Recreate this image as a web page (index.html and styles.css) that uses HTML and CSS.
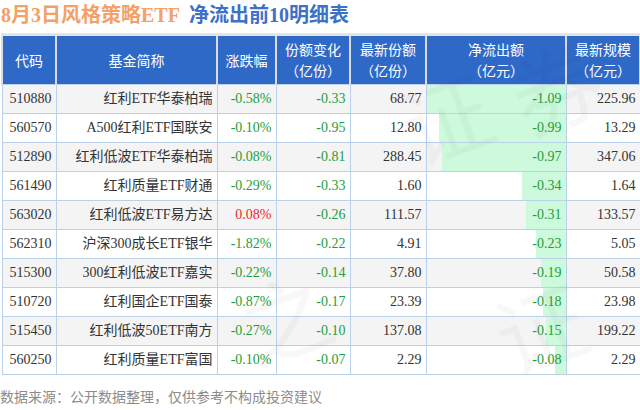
FILE: index.html
```html
<!DOCTYPE html>
<html lang="zh-CN">
<head>
<meta charset="utf-8">
<title>8月3日风格策略ETF 净流出前10明细表</title>
<link rel="stylesheet" href="styles.css">
</head>
<body>
<div class="page">
  <h1 class="title"><span class="t-orange">8月3日风格策略ETF</span><span class="t-blue">净流出前10明细表</span></h1>
  <div class="table-wrap">
    <table class="tbl">
      <colgroup>
        <col class="c1"><col class="c2"><col class="c3"><col class="c4"><col class="c5"><col class="c6"><col class="c7">
      </colgroup>
      <thead>
        <tr>
          <th>代码</th>
          <th>基金简称</th>
          <th>涨跌幅</th>
          <th>份额变化<br>（亿份）</th>
          <th>最新份额<br>（亿份）</th>
          <th>净流出额<br>（亿元）</th>
          <th>最新规模<br>（亿元）</th>
        </tr>
      </thead>
      <tbody>
        <tr><td>510880</td><td>红利ETF华泰柏瑞</td><td class="g">-0.58%</td><td class="g">-0.33</td><td>68.77</td><td class="bar-cell"><span class="bar" style="width:100%"></span><span class="v g">-1.09</span></td><td>225.96</td></tr>
        <tr><td>560570</td><td>A500红利ETF国联安</td><td class="g">-0.10%</td><td class="g">-0.95</td><td>12.80</td><td class="bar-cell"><span class="bar" style="width:90.8%"></span><span class="v g">-0.99</span></td><td>13.29</td></tr>
        <tr><td>512890</td><td>红利低波ETF华泰柏瑞</td><td class="g">-0.08%</td><td class="g">-0.81</td><td>288.45</td><td class="bar-cell"><span class="bar" style="width:89%"></span><span class="v g">-0.97</span></td><td>347.06</td></tr>
        <tr><td>561490</td><td>红利质量ETF财通</td><td class="g">-0.29%</td><td class="g">-0.33</td><td>1.60</td><td class="bar-cell"><span class="bar" style="width:31.2%"></span><span class="v g">-0.34</span></td><td>1.64</td></tr>
        <tr><td>563020</td><td>红利低波ETF易方达</td><td class="r">0.08%</td><td class="g">-0.26</td><td>111.57</td><td class="bar-cell"><span class="bar" style="width:28.4%"></span><span class="v g">-0.31</span></td><td>133.57</td></tr>
        <tr><td>562310</td><td>沪深300成长ETF银华</td><td class="g">-1.82%</td><td class="g">-0.22</td><td>4.91</td><td class="bar-cell"><span class="bar" style="width:21.1%"></span><span class="v g">-0.23</span></td><td>5.05</td></tr>
        <tr><td>515300</td><td>300红利低波ETF嘉实</td><td class="g">-0.22%</td><td class="g">-0.14</td><td>37.80</td><td class="bar-cell"><span class="bar" style="width:17.4%"></span><span class="v g">-0.19</span></td><td>50.58</td></tr>
        <tr><td>510720</td><td>红利国企ETF国泰</td><td class="g">-0.87%</td><td class="g">-0.17</td><td>23.39</td><td class="bar-cell"><span class="bar" style="width:16.5%"></span><span class="v g">-0.18</span></td><td>23.98</td></tr>
        <tr><td>515450</td><td>红利低波50ETF南方</td><td class="g">-0.27%</td><td class="g">-0.10</td><td>137.08</td><td class="bar-cell"><span class="bar" style="width:13.8%"></span><span class="v g">-0.15</span></td><td>199.22</td></tr>
        <tr><td>560250</td><td>红利质量ETF富国</td><td class="g">-0.10%</td><td class="g">-0.07</td><td>2.29</td><td class="bar-cell"><span class="bar" style="width:7.3%"></span><span class="v g">-0.08</span></td><td>2.29</td></tr>
      </tbody>
    </table>
  </div>
  <p class="source">数据来源：公开数据整理，仅供参考不构成投资建议</p>
  <div class="watermark" aria-hidden="true">
    <span class="wm wm1">证</span>
    <span class="wm wm2">券</span>
    <span class="wm wm3">之</span>
    <span class="wm wm4">证</span>
  </div>
</div>
</body>
</html>
```
FILE: styles.css
```css
html, body {
  margin: 0;
  padding: 0;
  background: #ffffff;
}
.page {
  position: relative;
  width: 640px;
  height: 410px;
  overflow: hidden;
  font-family: "Liberation Serif", "Noto Sans CJK SC", serif;
  color: #333333;
}
.title {
  margin: 0;
  padding: 2px 0 0 1px;
  height: 33px;
  box-sizing: border-box;
  font-size: 20px;
  line-height: 26px;
  font-weight: bold;
  white-space: nowrap;
}
.t-orange { color: #f4a066; }
.t-blue { color: #3d70c6; margin-left: 9px; }
.table-wrap {
  padding: 0 1px 0 1px;
}
.tbl {
  width: 638px;
  border-collapse: collapse;
  table-layout: fixed;
  font-size: 14px;
}
.c1 { width: 54px; }
.c2 { width: 161px; }
.c3 { width: 59px; }
.c4 { width: 74px; }
.c5 { width: 76px; }
.c6 { width: 140px; }
.c7 { width: 74px; }
.tbl th {
  height: 48px;
  padding: 0;
  background: #2f69c8;
  color: #ffffff;
  font-family: "Noto Sans CJK SC", sans-serif;
  font-weight: normal;
  font-size: 14px;
  line-height: 21px;
  text-align: center;
  border-top: 3px solid #e4e4e4;
  border-left: 2px solid #dcdcdc;
  border-right: 2px solid #dcdcdc;
  border-bottom: 1px solid #b9d2ea;
}
.tbl td {
  height: 28px;
  padding: 0 4px 0 0;
  text-align: right;
  white-space: nowrap;
  border: 1px solid #b9d2ea;
  color: #333333;
  line-height: 28px;
}
.tbl tbody tr:nth-child(odd) td { background: #f4f4f4; }
.tbl tbody tr:nth-child(even) td { background: #ffffff; }
.tbl td.g { color: #1f9e3c; }
.tbl td.r { color: #ee2a2a; }
.tbl td.bar-cell { position: relative; padding: 0; }
.bar {
  position: absolute;
  top: 0;
  bottom: 0;
  right: 0;
  background: #cdf9dc;
}
.v {
  position: relative;
  padding-right: 4px;
  color: #1f9e3c;
}
.source {
  margin: 11px 0 0 0;
  font-family: "Noto Sans CJK SC", sans-serif;
  font-size: 14px;
  line-height: 20px;
  color: #8c8c8c;
}
.watermark {
  position: absolute;
  inset: 0;
  pointer-events: none;
}
.wm {
  position: absolute;
  font-family: "Noto Sans CJK SC", sans-serif;
  font-size: 90px;
  line-height: 1;
  color: rgba(0, 0, 0, 0.028);
  white-space: nowrap;
  transform: rotate(-20deg);
}
.wm1 { left: 400px; top: 70px; }
.wm2 { left: 510px; top: 40px; }
.wm3 { left: 240px; top: 270px; }
.wm4 { left: 495px; top: 280px; }
```
